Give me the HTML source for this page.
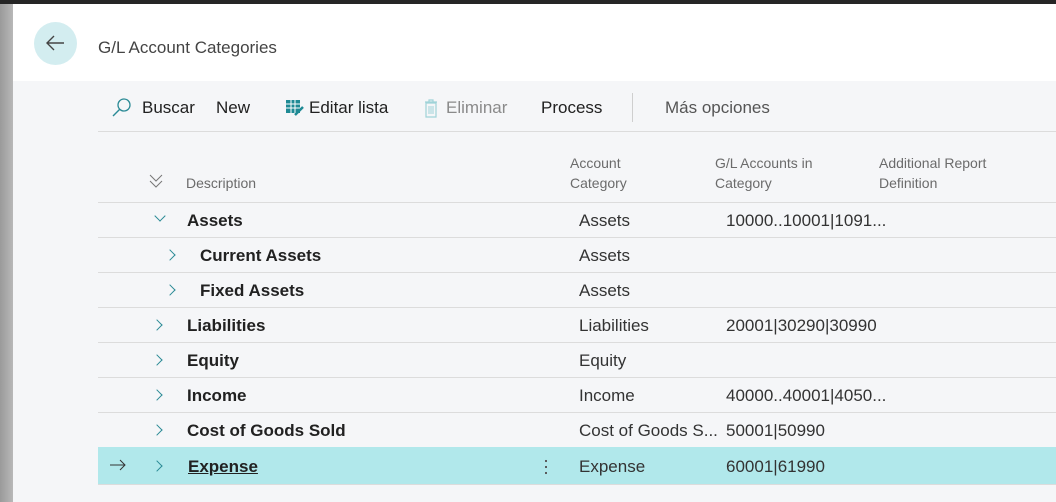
<!DOCTYPE html>
<html><head><style>
*{margin:0;padding:0;box-sizing:border-box}
body{width:1056px;height:502px;overflow:hidden;background:#f5f6f8;font-family:"Liberation Sans",sans-serif;position:relative;color:#212121}
.a{position:absolute;white-space:nowrap}
.top{left:0;top:0;width:1056px;height:4px;background:#262626}
.side{left:0;top:4px;width:13px;height:498px;background:linear-gradient(90deg,#9a9a9a,#b8b8b8)}
.hdr{left:13px;top:4px;width:1043px;height:77px;background:#fff}
.tb{font-size:17px;top:98px;color:#212121}
.h{font-size:14px;color:#6b6b6b;line-height:20px}
.line{left:98px;width:958px;height:1px;background:#dcdcdc}
.r{font-size:17px;font-weight:bold}
.c{font-size:17px;color:#333}
.chev{width:8px;height:8px;border-right:1.3px solid #2a8a95;border-bottom:1.3px solid #2a8a95;transform:rotate(-45deg)}
</style></head><body>
<div class="a top"></div><div class="a side"></div><div class="a hdr"></div>
<div class="a" style="left:34px;top:22px;width:43px;height:43px;border-radius:50%;background:#d3edf0"></div>
<svg class="a" style="left:44px;top:33px" width="22" height="20"><path d="M20 10H3M10 3L3 10L10 17" fill="none" stroke="#444" stroke-width="1.4"/></svg>
<div class="a" style="left:98px;top:38px;font-size:17px;color:#444">G/L Account Categories</div>
<svg class="a" style="left:111px;top:97px" width="22" height="22"><circle cx="13" cy="8" r="6" fill="none" stroke="#2a8a95" stroke-width="1.3"/><path d="M9 12L2 19" stroke="#2a8a95" stroke-width="1.4"/></svg>
<div class="a tb" style="left:142px">Buscar</div>
<div class="a tb" style="left:216px">New</div>
<svg class="a" style="left:285px;top:99px" width="20" height="18"><rect x="1" y="1" width="14" height="13" fill="#1e8a94"/><path d="M1 5H15M1 9H15M6 1V14M10 1V14" stroke="#fff" stroke-width="1"/><path d="M10 16L18 8" stroke="#1e8a94" stroke-width="2.5"/></svg>
<div class="a tb" style="left:309px">Editar lista</div>
<svg class="a" style="left:423px;top:98px" width="16" height="20"><path d="M2 4H14M6 4V2H10V4M3 5H13V19H3Z" fill="none" stroke="#9fd3d8" stroke-width="1.2"/><path d="M6 8V16M8 8V16M10 8V16" stroke="#9fd3d8"/></svg>
<div class="a tb" style="left:446px;color:#8a8a8a">Eliminar</div>
<div class="a tb" style="left:541px">Process</div>
<div class="a" style="left:632px;top:93px;width:1px;height:29px;background:#cfcfcf"></div>
<div class="a tb" style="left:665px;color:#555">Más opciones</div>
<div class="a line" style="top:131px"></div>
<svg class="a" style="left:149px;top:173px" width="14" height="16"><path d="M1 2L7 8L13 2M1 8L7 14L13 8" fill="none" stroke="#777" stroke-width="1"/></svg>
<div class="a h" style="left:186px;top:173px">Description</div>
<div class="a h" style="left:570px;top:153px">Account<br>Category</div>
<div class="a h" style="left:715px;top:153px">G/L Accounts in<br>Category</div>
<div class="a h" style="left:879px;top:153px">Additional Report<br>Definition</div>
<div class="a line" style="top:202px"></div>
<div class="a line" style="top:237px"></div>
<div class="a line" style="top:272px"></div>
<div class="a line" style="top:307px"></div>
<div class="a line" style="top:342px"></div>
<div class="a line" style="top:377px"></div>
<div class="a line" style="top:412px"></div>
<div class="a" style="left:98px;top:447px;width:958px;height:37px;background:#b1e8eb"></div>
<div class="a line" style="top:484px"></div>
<div class="a chev" style="left:156px;top:212px;transform:rotate(45deg)"></div>
<div class="a r" style="left:187px;top:211px">Assets</div><div class="a c" style="left:579px;top:211px">Assets</div><div class="a c" style="left:726px;top:211px">10000..10001|1091...</div>
<div class="a chev" style="left:166px;top:251px"></div>
<div class="a r" style="left:200px;top:246px">Current Assets</div><div class="a c" style="left:579px;top:246px">Assets</div>
<div class="a chev" style="left:166px;top:286px"></div>
<div class="a r" style="left:200px;top:281px">Fixed Assets</div><div class="a c" style="left:579px;top:281px">Assets</div>
<div class="a chev" style="left:153px;top:321px"></div>
<div class="a r" style="left:187px;top:316px">Liabilities</div><div class="a c" style="left:579px;top:316px">Liabilities</div><div class="a c" style="left:726px;top:316px">20001|30290|30990</div>
<div class="a chev" style="left:153px;top:356px"></div>
<div class="a r" style="left:187px;top:351px">Equity</div><div class="a c" style="left:579px;top:351px">Equity</div>
<div class="a chev" style="left:153px;top:391px"></div>
<div class="a r" style="left:187px;top:386px">Income</div><div class="a c" style="left:579px;top:386px">Income</div><div class="a c" style="left:726px;top:386px">40000..40001|4050...</div>
<div class="a chev" style="left:153px;top:426px"></div>
<div class="a r" style="left:187px;top:421px">Cost of Goods Sold</div><div class="a c" style="left:579px;top:421px">Cost of Goods S...</div><div class="a c" style="left:726px;top:421px">50001|50990</div>
<svg class="a" style="left:109px;top:459px" width="18" height="12"><path d="M1 6H16M11 1L16 6L11 11" fill="none" stroke="#333" stroke-width="1"/></svg>
<div class="a chev" style="left:153px;top:462px"></div>
<div class="a r" style="left:188px;top:457px;text-decoration:underline">Expense</div>
<div class="a" style="left:545px;top:458px;width:2px;height:18px;background:radial-gradient(circle,#555 1px,transparent 1.3px) 0 0/2px 6px"></div>
<div class="a c" style="left:579px;top:457px">Expense</div><div class="a c" style="left:726px;top:457px">60001|61990</div>
</body></html>
